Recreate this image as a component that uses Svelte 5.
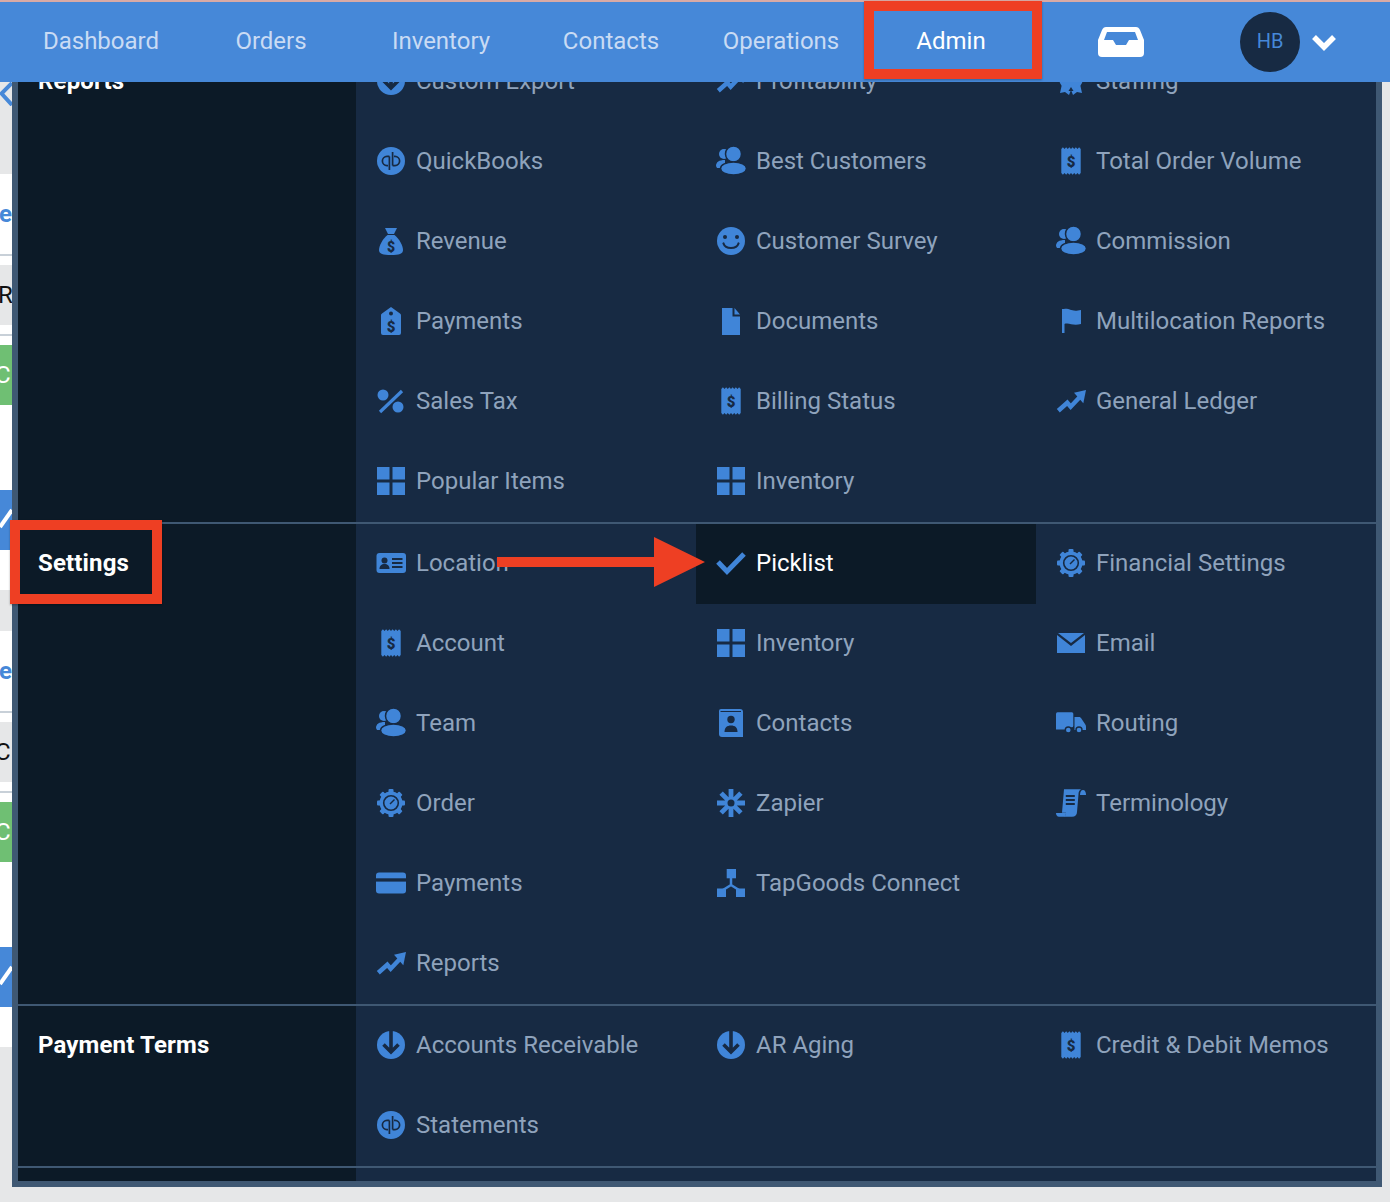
<script>
  const D = '#172a43';
  const dollar = (x, y, s = 13) => `<text x="${x}" y="${y}" text-anchor="middle" font-family="Roboto" font-weight="900" font-size="${s}" fill="${D}">$</text>`;
  const gear = (() => {
    let t = '';
    for (let i = 0; i < 8; i++) t += `<rect x="12.500" y="1" width="5" height="5" rx="1" transform="rotate(${i * 45} 15 15)"/>`;
    return t;
  })();
  const zig = (dir) => {
    let s = '';
    for (let i = 0; i < 6; i++) s += ` l${dir * 1.617} ${dir * -1.800} l${dir * 1.617} ${dir * 1.800}`;
    return s;
  };
  const receiptPath = `M5.300 3${zig(1)} V27${zig(-1)} Z`;
  const icons = {
    qb: `<circle cx="15" cy="15" r="14"/><g fill="none" stroke="${D}" stroke-width="1.700"><path d="M13.400 10.400H11a4.600 4.600 0 0 0 0 9.200h1"/><path d="M13.400 10.400V24"/><path d="M16.600 19.600H19a4.600 4.600 0 0 0 0-9.200h-1"/><path d="M16.600 19.600V6"/></g>`,
    bag: `<path d="M9 2h12l-3 6h-6z"/><path d="M11.500 9h7C23 12.500 27 19.500 27 24c0 4-4 5-12 5S3 28 3 24c0-4.500 4-11.500 8.500-15z"/>${dollar(15, 25.500, 14)}`,
    tag: `<path d="M15 1l9 6.500c.700.500 1 1 1 2V27a2 2 0 0 1-2 2H7a2 2 0 0 1-2-2V9.500c0-1 .300-1.500 1-2z"/><circle cx="15" cy="7.500" r="2" fill="${D}"/>${dollar(15, 25.500, 15)}`,
    percent: `<circle cx="7" cy="9" r="5.500"/><circle cx="22" cy="21" r="5.500"/><path d="M4 26L26 5" fill="none" stroke="currentColor" stroke-width="3.200"/>`,
    grid: `<rect x="1" y="1" width="12.500" height="12.500"/><rect x="16.500" y="1" width="12.500" height="12.500"/><rect x="1" y="16.500" width="12.500" height="12.500"/><rect x="16.500" y="16.500" width="12.500" height="12.500"/>`,
    smile: `<circle cx="15" cy="15" r="14"/><circle cx="9" cy="11" r="2" fill="${D}"/><circle cx="21" cy="11" r="2" fill="${D}"/><path d="M7.500 17.500c2 6 13 6 15 0" fill="none" stroke="${D}" stroke-width="2.200" stroke-linecap="round"/>`,
    doc: `<path d="M6 2h10.500v8.500H24V29H6z"/><path d="M18.500 2L24 8.500h-5.500z"/>`,
    receipt: `<path d="${receiptPath}"/>${dollar(15, 20.500, 15)}`,
    users: `<circle cx="8" cy="8" r="5"/><path d="M0 20c0-4 3-6 9-6v8H1z"/><circle cx="17.500" cy="8" r="8" stroke="${D}" stroke-width="1.500"/><ellipse cx="17.500" cy="22.500" rx="13" ry="6.500" stroke="${D}" stroke-width="1.500"/>`,
    flag: `<rect x="6" y="3" width="2.500" height="24"/><path d="M8 3c6-1 7 3.500 17 1v14c-9 2.500-11-2-17 0z"/>`,
    chart: `<path d="M2.300 24.700L11.300 16.700 14.700 20.700 25.700 9" fill="none" stroke="currentColor" stroke-width="4.500"/><path d="M18 6.700L30 4 27.300 17.300z"/>`,
    idcard: `<rect x=".5" y="5" width="29.500" height="20" rx="3"/><circle cx="8.500" cy="12.500" r="3" fill="${D}"/><path d="M3.500 21c0-3.500 2-5 5-5s5 1.500 5 5z" fill="${D}"/><path d="M16 11h10.500M16 15h10.500M16 19h10.500" stroke="${D}" stroke-width="2"/>`,
    check: `<path d="M2 14l9 9.500L28 6" fill="none" stroke="currentColor" stroke-width="5"/>`,
    gear: `${gear}<circle cx="15" cy="15" r="11.500"/><circle cx="15" cy="15" r="7.300" fill="none" stroke="${D}" stroke-width="1.600"/><path d="M14 16l4.500-4.500" stroke="${D}" stroke-width="1.400"/>`,
    mail: `<path d="M2 5h26L15 15z"/><path d="M1 7l14 11L29 7V25H1z"/>`,
    truck: `<rect x="0" y="4.300" width="17.300" height="15" rx="1.500"/><rect x="0" y="17.500" width="12" height="4"/><path d="M18.500 9H23c1 0 1.500.500 2 1l4 6c.700 1 1 1.500 1 3v3H18.500z"/><circle cx="12.300" cy="22" r="3" stroke="${D}" stroke-width="1.400"/><circle cx="23" cy="22" r="3" stroke="${D}" stroke-width="1.400"/>`,
    scroll: `<path d="M8 1.300H25c-2 1-2.500 3-2.500 5L21 24c0 3-2 4.700-5 4.700H7c2-1 3-2 3-4H6z"/><path d="M0 25h10c0 2-1 3.700-3 3.700H3c-2 0-3-1.700-3-3.700z"/><path d="M24 7c0-3 1-5 3-5s3 2 3 5z"/><path d="M9.800 8h9M9.800 12h9M9.800 16h9" stroke="${D}" stroke-width="1.800"/>`,
    book: `<path d="M5 1h19a3 3 0 0 1 3 3v25H6a3 3 0 0 1-3-3V3a2 2 0 0 1 2-2z"/><path d="M4.500 3.500H25" stroke="${D}" stroke-width="1"/><circle cx="15" cy="11.500" r="3.700" fill="${D}"/><path d="M8.500 24c0-4.500 2.500-6.500 6.500-6.500s6.500 2 6.500 6.500z" fill="${D}"/>`,
    zap: `<g stroke="currentColor" stroke-width="4.800"><path d="M15 1v28M1 15h28M5.100 5.100l19.800 19.800M24.900 5.100L5.100 24.900"/></g><circle cx="15" cy="15" r="3.500" fill="${D}"/>`,
    site: `<rect x="10.700" y="1" width="9.300" height="9.300"/><rect x="1" y="20.500" width="9" height="8.500"/><rect x="20" y="20.500" width="9" height="8.500"/><path d="M15 10v7M15 17l-8 5M15 17l8 5" fill="none" stroke="currentColor" stroke-width="2.500"/>`,
    card: `<rect x="0" y="4.500" width="30" height="21" rx="3"/><rect x="0" y="10.300" width="30" height="3.300" fill="${D}"/>`,
    down: `<circle cx="15" cy="15" r="14"/><path d="M15 0v22M7.500 14.500L15 22l7.500-7.500" fill="none" stroke="${D}" stroke-width="3.600"/>`,
    award: `<circle cx="15" cy="12" r="12"/><path d="M6 18l-2 9 5-1 4 3 2-5 2 5 4-3 5 1-2-9z"/><path d="M15 21l-2.500 4h5z" fill="${D}"/>`
  };

  const sections = [
    {
      title: 'Reports',
      items: [
        ['Custom Export', 'down'], ['Profitability', 'chart'], ['Staffing', 'award'],
        ['QuickBooks', 'qb'], ['Best Customers', 'users'], ['Total Order Volume', 'receipt'],
        ['Revenue', 'bag'], ['Customer Survey', 'smile'], ['Commission', 'users'],
        ['Payments', 'tag'], ['Documents', 'doc'], ['Multilocation Reports', 'flag'],
        ['Sales Tax', 'percent'], ['Billing Status', 'receipt'], ['General Ledger', 'chart'],
        ['Popular Items', 'grid'], ['Inventory', 'grid']
      ]
    },
    {
      title: 'Settings',
      items: [
        ['Location', 'idcard'], ['Picklist', 'check', true], ['Financial Settings', 'gear'],
        ['Account', 'receipt'], ['Inventory', 'grid'], ['Email', 'mail'],
        ['Team', 'users'], ['Contacts', 'book'], ['Routing', 'truck'],
        ['Order', 'gear'], ['Zapier', 'zap'], ['Terminology', 'scroll'],
        ['Payments', 'card'], ['TapGoods Connect', 'site'], null,
        ['Reports', 'chart']
      ]
    },
    {
      title: 'Payment Terms',
      items: [
        ['Accounts Receivable', 'down'], ['AR Aging', 'down'], ['Credit & Debit Memos', 'receipt'],
        ['Statements', 'qb']
      ]
    }
  ];
  const navItems = ['Dashboard', 'Orders', 'Inventory', 'Contacts', 'Operations', 'Admin'];
</script>

<div class="page">
  <header class="nav">
    {#each navItems as n}
      <a class="nav-item" class:current={n === 'Admin'} href="#top">{n}</a>
    {/each}
    <div class="inbox">
      <svg width="46" height="30" viewBox="0 0 46 30">
        <path fill="#fff" d="M8 0H38C40 0 41 1 42 3L46 13V26a4 4 0 0 1-4 4H4a4 4 0 0 1-4-4V13L4 3C5 1 6 0 8 0z" />
        <path fill="#4688d8" d="M9 5H37L40 13H31L28 18H18L15 13H6z" />
      </svg>
    </div>
    <div class="avatar">HB</div>
    <svg class="caret" width="26" height="18" viewBox="0 0 26 18">
      <path d="M3 4l10 10L23 4" fill="none" stroke="#fff" stroke-width="5.500" />
    </svg>
  </header>

  <div class="strip">
    <div class="b grey tall">
      <svg width="12" height="24" viewBox="0 0 12 24"><path d="M12 1L1.500 11.500 12 23" fill="none" stroke="#4688d8" stroke-width="4" /></svg>
    </div>
    <div class="b white h80"><span class="blue">e</span></div>
    <div class="b line"></div>
    <div class="b white h9"></div>
    <div class="b grey h60"><span class="ink">Re</span></div>
    <div class="b white h9"></div>
    <div class="b line"></div>
    <div class="b white h9"></div>
    <div class="b green h60"><span class="wh">C</span></div>
    <div class="b white h85"></div>
    <div class="b bluebox h60"><svg width="12" height="60" viewBox="0 0 12 60"><path d="M0 37L12 20" fill="none" stroke="#fff" stroke-width="4" /></svg></div>
    <div class="b white h40"></div>
    <div class="b grey h41"></div>
    <div class="b white h80"><span class="blue">e</span></div>
    <div class="b line"></div>
    <div class="b white h9"></div>
    <div class="b grey h60"><span class="ink second">C</span></div>
    <div class="b white h9"></div>
    <div class="b line"></div>
    <div class="b white h9"></div>
    <div class="b green h60"><span class="wh">C</span></div>
    <div class="b white h85"></div>
    <div class="b bluebox h60"><svg width="12" height="60" viewBox="0 0 12 60"><path d="M0 37L12 20" fill="none" stroke="#fff" stroke-width="4" /></svg></div>
    <div class="b white h40"></div>
  </div>

  <div class="panel">
    {#each sections as s}
      <section class="sec">
        <h3 class="side">{s.title}</h3>
        <div class="links">
          {#each s.items as it}
            {#if it}
              <a class="link" class:active={it[2]} href="#top">
                <svg class="ic" width="30" height="30" viewBox="0 0 30 30" fill="currentColor">{@html icons[it[1]]}</svg>
                <span>{it[0]}</span>
              </a>
            {:else}
              <div></div>
            {/if}
          {/each}
        </div>
      </section>
    {/each}
    <section class="sec end"><div class="side"></div><div class="links"></div></section>
  </div>

  <div class="mark admin"></div>
  <div class="mark settings"></div>
  <svg class="arrow" width="210" height="52" viewBox="0 0 210 52">
    <path fill="#ee3f23" d="M0 20H157V0L208 25 157 50V30H0z" />
  </svg>
</div>

<style>
  :global(body) { margin: 0; background: #e6e7e8; }
  .page {
    position: relative;
    height: 1202px;
    overflow: hidden;
    background: #e6e7e8;
    font-family: Roboto, "Liberation Sans", sans-serif;
    font-size: 24px;
  }
  .nav {
    position: relative;
    z-index: 3;
    display: grid;
    grid-template-columns: repeat(7, 170px) 60px 26px;
    align-items: center;
    box-sizing: border-box;
    height: 82px;
    padding-left: 16px;
    background: #4688d8;
    border-top: 2px solid #d9aaa5;
  }
  .nav-item {
    text-align: center;
    color: #c9dbf4;
    text-decoration: none;
    line-height: 80px;
    height: 80px;
    transform: translateY(-1px);
  }
  .nav-item.current { color: #fff; }
  .inbox { display: flex; justify-content: center; height: 30px; }
  .avatar {
    width: 60px;
    height: 60px;
    margin-left: 34px;
    border-radius: 50%;
    background: #172a43;
    color: #4688d8;
    font-size: 20px;
    line-height: 58px;
    text-align: center;
  }
  .caret { margin-left: 45px; }

  .strip { width: 12px; }
  .b { overflow: visible; white-space: nowrap; line-height: 1; box-sizing: border-box; }
  .grey { background: #e6e7e8; }
  .white { background: #fff; }
  .green { background: #6fbf73; }
  .bluebox { background: #4688d8; }
  .line { height: 2px; background: #c8d0d8; }
  .tall { height: 92px; }
  .h9 { height: 9px; }
  .h40 { height: 40px; }
  .h41 { height: 41px; }
  .h60 { height: 60px; }
  .h80 { height: 80px; }
  .h85 { height: 85px; }
  .b svg { display: block; }
  .h80, .h60 { display: flex; align-items: center; }
  .blue { color: #4688d8; font-weight: 700; margin-left: -1px; }
  .ink { color: #111; margin-left: -2px; }
  .ink.second { margin-left: -5px; }
  .wh { color: #fff; margin-left: -5px; }
  .bluebox { display: block; }

  .panel {
    position: absolute;
    z-index: 1;
    left: 12px;
    top: 36px;
    width: 1370px;
    box-sizing: border-box;
    border: 6px solid #3f5873;
    background: #172a43;
  }
  .sec {
    display: flex;
    border-bottom: 2px solid #3f5873;
  }
  .sec.end { border-bottom: 0; height: 13px; }
  .side {
    flex: 0 0 338px;
    box-sizing: border-box;
    margin: 0;
    padding: 0 20px;
    background: #0c1a27;
    color: #fff;
    font-size: 24px;
    font-weight: 700;
    line-height: 78px;
    letter-spacing: .15px;
  }
  .links {
    display: grid;
    flex: 1;
    grid-template-columns: repeat(3, 340px);
    grid-auto-rows: 80px;
  }
  .link {
    display: flex;
    align-items: center;
    gap: 10px;
    box-sizing: border-box;
    padding: 0 0 2px 20px;
    color: #8fa3bc;
    text-decoration: none;
  }
  .ic { flex: none; color: #4085d8; }
  .link.active { background: #0c1a27; color: #fff; }

  .mark {
    position: absolute;
    z-index: 4;
    box-sizing: border-box;
    border: 10px solid #ee3f23;
    box-shadow: 0 1px 2px rgba(0, 0, 0, .3);
  }
  .admin { left: 864px; top: 1px; width: 178px; height: 78px; }
  .settings { left: 10px; top: 520px; width: 152px; height: 84px; }
  .arrow { position: absolute; z-index: 4; left: 497px; top: 537px; }
</style>
